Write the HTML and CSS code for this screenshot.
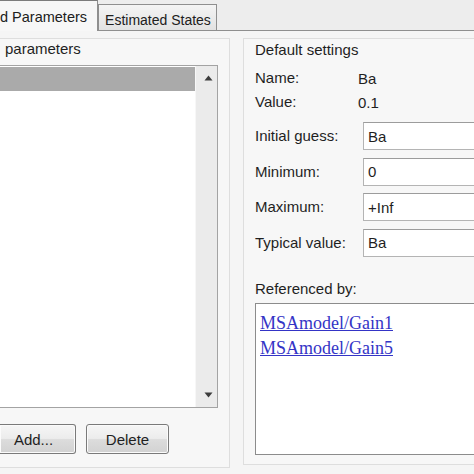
FILE: index.html
```html
<!DOCTYPE html>
<html>
<head>
<meta charset="utf-8">
<link rel="stylesheet" href="styles.css">
</head>
<body>
<div class="window">
  <div class="tabs">
    <div class="tab active">d Parameters</div>
    <div class="tab">Estimated States</div>
    <div class="tab-fill"></div>
  </div>
  <div class="content">
    <div class="group left">
      <div class="group-title">parameters</div>
      <div class="list">
        <div class="list-items">
          <div class="row selected"></div>
        </div>
        <div class="scrollbar">
          <svg class="arrow" width="9" height="6" viewBox="0 0 9 6"><path d="M0.5 5.5 L4.5 0.5 L8.5 5.5 Z" fill="#3c3c3c"/></svg>
          <svg class="arrow" width="9" height="6" viewBox="0 0 9 6"><path d="M0.5 0.5 L4.5 5.5 L8.5 0.5 Z" fill="#3c3c3c"/></svg>
        </div>
      </div>
      <div class="buttons">
        <button class="btn btn-cut">Add...</button>
        <button class="btn">Delete</button>
      </div>
    </div>
    <div class="group right">
      <div class="group-title">Default settings</div>
      <div class="info">
        <span class="label">Name:</span><span class="val">Ba</span>
        <span class="label">Value:</span><span class="val">0.1</span>
      </div>
      <div class="fields">
        <span class="label">Initial guess:</span><input class="field" type="text" value="Ba">
        <span class="label">Minimum:</span><input class="field" type="text" value="0">
        <span class="label">Maximum:</span><input class="field" type="text" value="+Inf">
        <span class="label">Typical value:</span><input class="field" type="text" value="Ba">
      </div>
      <div class="ref-title">Referenced by:</div>
      <div class="ref-box">
        <a class="ref-link" href="#">MSAmodel/Gain1</a>
        <a class="ref-link" href="#">MSAmodel/Gain5</a>
      </div>
    </div>
  </div>
</div>
</body>
</html>
```
FILE: styles.css
```css
html, body {
  margin: 0;
  padding: 0;
}
body {
  width: 474px;
  height: 474px;
  overflow: hidden;
  background: #ededed;
  font-family: "Liberation Sans", Arial, sans-serif;
  font-size: 15px;
  color: #1f1f1f;
}
.window {
  width: 474px;
  overflow: hidden;
}
.tabs {
  display: flex;
  align-items: flex-end;
  height: 31px;
}
.tab {
  box-sizing: border-box;
  height: 27px;
  padding: 3px 5px 0 6px;
  font-size: 14px;
  line-height: 24px;
  border: 1px solid #8f8f8f;
  background: linear-gradient(#f4f4f4, #e2e2e2);
  color: #202020;
}
.tab.active {
  height: 31px;
  padding: 0 10px 0 0;
  font-size: 14.5px;
  line-height: 33px;
  border-left: none;
  border-bottom: none;
  border-top-color: #7c7c7c;
  background: #f7f7f7;
}
.tab-fill {
  flex: 1;
  border-bottom: 1px solid #8f8f8f;
}
.content {
  display: flex;
  gap: 13px;
  padding-top: 7px;
  background: #f5f5f5;
  height: 436px;
}
.group {
  box-sizing: border-box;
  border: 1px solid #dedede;
  background: #f7f7f7;
  display: flex;
  flex-direction: column;
  flex-shrink: 0;
}
.group-title {
  line-height: 18px;
}
.left {
  width: 230px;
  height: 430px;
  border-left: none;
  padding: 1px 11px 13px 0;
}
.left .group-title {
  padding-left: 5px;
}
.list {
  margin-top: 7px;
  height: 343px;
  box-sizing: border-box;
  border: 1px solid #a3a3a3;
  border-left: none;
  background: #fff;
  display: flex;
}
.list-items {
  flex: 1;
  padding-top: 1px;
}
.row {
  height: 24px;
}
.row.selected {
  background: #aaaaaa;
}
.scrollbar {
  width: 22px;
  box-sizing: border-box;
  border-left: 1px solid #f7f7f7;
  background: #ebebeb;
  display: flex;
  flex-direction: column;
  align-items: center;
  justify-content: space-between;
  padding: 9px 0 9px 3px;
}
.buttons {
  display: flex;
  gap: 10px;
  margin-top: 16px;
}
.btn {
  width: 83px;
  height: 30px;
  box-sizing: border-box;
  border: 1px solid #7a7a7a;
  border-radius: 3px;
  background: linear-gradient(#f6f6f6 0%, #ececec 48%, #dcdcdc 52%, #d2d2d2 100%);
  box-shadow: inset 0 0 0 1px #fbfbfb;
  font-family: "Liberation Sans", Arial, sans-serif;
  font-size: 15px;
  color: #1f1f1f;
  padding: 0;
}
.btn-cut {
  width: 76px;
  border-left: none;
  border-radius: 0 3px 3px 0;
  padding-right: 8px;
}
.right {
  width: 300px;
  height: 427px;
  padding: 2px 0 9px 11px;
}
.info {
  display: grid;
  grid-template-columns: 103px 1fr;
  grid-auto-rows: 24px;
  align-items: center;
  margin-top: 7px;
}
.fields {
  display: grid;
  grid-template-columns: 108px 1fr;
  grid-auto-rows: 28px;
  row-gap: 7.5px;
  align-items: center;
  margin-top: 8px;
}
.label {
  line-height: 18px;
}
.field {
  box-sizing: border-box;
  height: 28px;
  width: 100%;
  margin: 0;
  border: 1px solid #b4b4b4;
  border-top-color: #9c9c9c;
  border-right: none;
  background: #fff;
  padding: 0 4px;
  font-family: "Liberation Sans", Arial, sans-serif;
  font-size: 15px;
  color: #1f1f1f;
}
.ref-title {
  margin-top: 23px;
  line-height: 18px;
}
.ref-box {
  margin-top: 5px;
  flex: 1;
  box-sizing: border-box;
  border: 1px solid #8c8c8c;
  border-right: none;
  background: #fff;
  padding: 7px 4px;
  display: flex;
  flex-direction: column;
  align-items: flex-start;
}
.ref-link {
  font-family: "Liberation Serif", "Times New Roman", serif;
  font-size: 18px;
  line-height: 25px;
  color: #3434c6;
  text-decoration: underline;
}
```
